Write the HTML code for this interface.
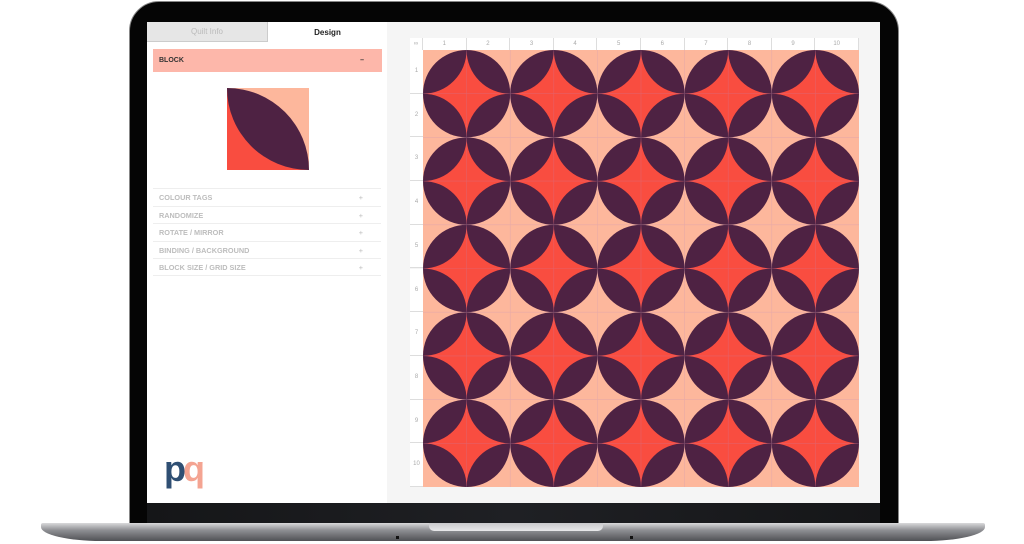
<!DOCTYPE html>
<html><head><style>
*{margin:0;padding:0;box-sizing:border-box}
body{width:1024px;height:544px;background:#fff;position:relative;overflow:hidden;font-family:"Liberation Sans",Arial,sans-serif}
.bezel{position:absolute;left:129px;top:1px;width:770px;height:526px;background:#050505;border-radius:30px 30px 0 0;border:1px solid #888}
.screen{position:absolute;left:147px;top:22px;width:733px;height:481px;background:#f5f5f5;overflow:hidden}
.chin{position:absolute;left:147px;top:503px;width:733px;height:20px;background:linear-gradient(90deg,#151618,#1f2024,#151618)}
.base{position:absolute;left:41px;top:523px;width:944px;height:18px;background:linear-gradient(#d9d9db,#8e8f93 40%,#505155);border-radius:2px 2px 60px 60px/2px 2px 14px 14px}
.notch{position:absolute;left:429px;top:523px;width:174px;height:8px;background:linear-gradient(#c9c9cc,#e8e8ea);border-radius:0 0 5px 5px}
.left{position:absolute;left:0;top:0;width:240px;height:481px;background:#fff}
.tab1{position:absolute;left:0;top:0;width:121px;height:20px;background:#e6e6e6;border-right:1px solid #ccc;border-bottom:1px solid #ccc;color:#bbb;font-size:8px;text-align:center;line-height:20px}
.tab2{position:absolute;left:121px;top:0;width:119px;height:20px;color:#222;font-size:8px;font-weight:bold;text-align:center;line-height:22px}
.blk{position:absolute;left:6px;top:27px;width:229px;height:23px;background:#fdb7aa;font-size:7px;font-weight:bold;color:#333;line-height:23px;padding-left:6px}
.blk span{position:absolute;right:18px}
.item{position:absolute;left:6px;width:228px;height:18px;border-top:1px solid #eee;font-size:7.3px;font-weight:bold;color:#bdbdbd;line-height:17px;padding-left:6px}
.item span{position:absolute;right:18px;font-weight:normal}
.logo{position:absolute;left:17px;top:429px;font-size:36px;font-weight:bold;letter-spacing:-3px;line-height:36px}
.hdr{position:absolute;top:16px;height:12px;background:#fff;border-right:1px solid #ddd;font-size:6px;color:#aaa;text-align:center;line-height:12px}
.rl{position:absolute;left:263px;width:13px;background:#fff;border-bottom:1px solid #ddd;font-size:6px;color:#aaa;text-align:center}
</style></head><body>
<div class="bezel"></div>
<div class="chin"></div>
<div class="screen">
 <div class="left">
  <div class="tab1">Quilt Info</div><div class="tab2">Design</div>
  <div class="blk">BLOCK<span>–</span></div>
  <svg style="position:absolute;left:80px;top:66px" width="82" height="82" viewBox="0 0 82 82">
   <rect width="82" height="82" fill="#f94d40"/>
   <path d="M0 0 L82 0 L82 82 Z" fill="#fdb79c"/>
   <path d="M0 0 A82 82 0 0 1 82 82 A82 82 0 0 1 0 0 Z" fill="#4e2243"/>
  </svg>
  <div class="item" style="top:166px">COLOUR TAGS<span>+</span></div>
  <div class="item" style="top:184px">RANDOMIZE<span>+</span></div>
  <div class="item" style="top:201px">ROTATE / MIRROR<span>+</span></div>
  <div class="item" style="top:219px">BINDING / BACKGROUND<span>+</span></div>
  <div class="item" style="top:236px;border-bottom:1px solid #eee">BLOCK SIZE / GRID SIZE<span>+</span></div>
  <div class="logo"><span style="color:#2f4f73">p</span><span style="color:#f4a492">q</span></div>
 </div>
 <div class="hdr" style="left:263px;width:13px">∞</div>
 <div class="hdr" style="left:276px;width:43.6px">1</div><div class="hdr" style="left:319.6px;width:43.6px">2</div><div class="hdr" style="left:363.2px;width:43.6px">3</div><div class="hdr" style="left:406.8px;width:43.6px">4</div><div class="hdr" style="left:450.4px;width:43.6px">5</div><div class="hdr" style="left:494px;width:43.6px">6</div><div class="hdr" style="left:537.6px;width:43.6px">7</div><div class="hdr" style="left:581.2px;width:43.6px">8</div><div class="hdr" style="left:624.8px;width:43.6px">9</div><div class="hdr" style="left:668.4px;width:43.6px">10</div>
 <div class="rl" style="top:28px;height:43.7px;line-height:43.7px">1</div><div class="rl" style="top:71.7px;height:43.7px;line-height:43.7px">2</div><div class="rl" style="top:115.4px;height:43.7px;line-height:43.7px">3</div><div class="rl" style="top:159.1px;height:43.7px;line-height:43.7px">4</div><div class="rl" style="top:202.8px;height:43.7px;line-height:43.7px">5</div><div class="rl" style="top:246.5px;height:43.7px;line-height:43.7px">6</div><div class="rl" style="top:290.2px;height:43.7px;line-height:43.7px">7</div><div class="rl" style="top:333.9px;height:43.7px;line-height:43.7px">8</div><div class="rl" style="top:377.6px;height:43.7px;line-height:43.7px">9</div><div class="rl" style="top:421.3px;height:43.7px;line-height:43.7px">10</div>
 <svg style="position:absolute;left:276px;top:28px" width="436" height="437" viewBox="0 0 436 437">
  <rect width="436" height="437" fill="#fdb79c"/>
  <defs>
   <g id="c">
    <circle cx="0" cy="0" r="43.6" fill="#4e2243"/>
    <path d="M0 -43.6 A43.6 43.6 0 0 0 43.6 0 A43.6 43.6 0 0 0 0 43.6 A43.6 43.6 0 0 0 -43.6 0 A43.6 43.6 0 0 0 0 -43.6 Z" fill="#f94d40"/>
   </g>
  </defs>
  <g transform="scale(1,1.0023)">
  <use href="#c" x="43.6" y="43.6"/><use href="#c" x="130.8" y="43.6"/><use href="#c" x="218" y="43.6"/><use href="#c" x="305.2" y="43.6"/><use href="#c" x="392.4" y="43.6"/>
  <use href="#c" x="43.6" y="130.8"/><use href="#c" x="130.8" y="130.8"/><use href="#c" x="218" y="130.8"/><use href="#c" x="305.2" y="130.8"/><use href="#c" x="392.4" y="130.8"/>
  <use href="#c" x="43.6" y="218"/><use href="#c" x="130.8" y="218"/><use href="#c" x="218" y="218"/><use href="#c" x="305.2" y="218"/><use href="#c" x="392.4" y="218"/>
  <use href="#c" x="43.6" y="305.2"/><use href="#c" x="130.8" y="305.2"/><use href="#c" x="218" y="305.2"/><use href="#c" x="305.2" y="305.2"/><use href="#c" x="392.4" y="305.2"/>
  <use href="#c" x="43.6" y="392.4"/><use href="#c" x="130.8" y="392.4"/><use href="#c" x="218" y="392.4"/><use href="#c" x="305.2" y="392.4"/><use href="#c" x="392.4" y="392.4"/>
  </g>
  <g stroke="#b890c0" stroke-opacity="0.3" stroke-width="0.6">
   <path d="M43.6 0V437M87.2 0V437M130.8 0V437M174.4 0V437M218 0V437M261.6 0V437M305.2 0V437M348.8 0V437M392.4 0V437M0 43.7H436M0 87.4H436M0 131.1H436M0 174.8H436M0 218.5H436M0 262.2H436M0 305.9H436M0 349.6H436M0 393.3H436"/>
  </g>
 </svg>
</div>
<div class="base"></div>
<div class="notch"></div>
<div style="position:absolute;left:396px;top:536px;width:3px;height:3px;background:#111"></div>
<div style="position:absolute;left:630px;top:536px;width:3px;height:3px;background:#111"></div>
</body></html>
